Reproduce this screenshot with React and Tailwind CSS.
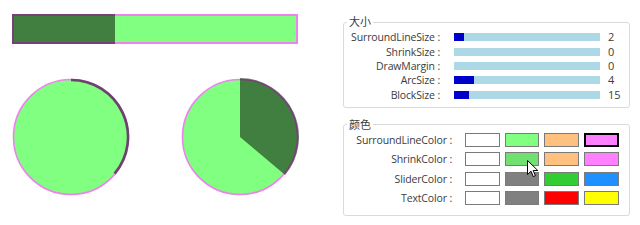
const sizes = [
  { label: 'SurroundLineSize :', value: 2, fill: 10 },
  { label: 'ShrinkSize :', value: 0, fill: 0 },
  { label: 'DrawMargin :', value: 0, fill: 0 },
  { label: 'ArcSize :', value: 4, fill: 20 },
  { label: 'BlockSize :', value: 15, fill: 15 },
]

const colors = [
  { label: 'SurroundLineColor :', swatches: ['bg-white', 'bg-[#80ff80]', 'bg-[#ffc080]', 'bg-[#ff80ff] border-black border-2'] },
  { label: 'ShrinkColor :', swatches: ['bg-white', 'bg-[#70e070]', 'bg-[#ffc080]', 'bg-[#ff80ff]'] },
  { label: 'SliderColor :', swatches: ['bg-white', 'bg-[#808080]', 'bg-[#32cd32]', 'bg-[#1e90ff]'] },
  { label: 'TextColor :', swatches: ['bg-white', 'bg-[#808080]', 'bg-[#ff0000]', 'bg-[#ffff00]'] },
]

const arcPoint = (cx, cy, r, deg) => {
  const a = (deg * Math.PI) / 180
  return [cx + r * Math.sin(a), cy - r * Math.cos(a)]
}

const Ring = () => {
  const [x, y] = arcPoint(60, 60, 57, 130)
  return (
    <svg width="120" height="120" viewBox="0 0 120 120">
      <circle cx="60" cy="60" r="57.5" fill="#80ff80" stroke="#ee82ee" strokeWidth="1.6" />
      <path d={`M60 3 A57 57 0 0 1 ${x} ${y}`} fill="none" stroke="#6b436b" strokeWidth="2.6" />
    </svg>
  )
}

const Pie = () => {
  const [x, y] = arcPoint(60, 60, 59, 130)
  return (
    <svg width="120" height="120" viewBox="0 0 120 120">
      <circle cx="60" cy="60" r="57.5" fill="#80ff80" stroke="#ee82ee" strokeWidth="1.6" />
      <path d={`M60 60 L60 1 A59 59 0 0 1 ${x} ${y} Z`} fill="rgba(0,0,0,0.5)" />
    </svg>
  )
}

const Cursor = () => (
  <svg className="absolute left-[527px] top-[160px]" width="12" height="18" viewBox="0 0 12 18">
    <path d="M0.5 0.5 L0.5 14.5 L4 11.2 L6.3 16.6 L8.4 15.7 L6.2 10.5 L10.8 10.5 Z" fill="white" stroke="black" strokeWidth="1" strokeLinejoin="round" />
  </svg>
)

export default function App() {
  return (
    <div className="relative flex w-[640px] h-[225px] bg-white font-['Open_Sans','Noto_Sans_CJK_SC',sans-serif] text-[11px] leading-[14px] text-[#3c3c3c]">
      <div className="w-[343px] pt-[14px]">
        <div className="relative ml-[12px] w-[286px] h-[30px] border-2 border-[#ee82ee] bg-[#80ff80]">
          <div className="absolute -left-[2px] -top-[2px] -bottom-[2px] w-[103px] bg-black/50" />
        </div>
        <div className="mt-[33px] ml-[11px] flex gap-[49px]">
          <Ring />
          <Pie />
        </div>
      </div>

      <div className="pt-[15px] w-[287px]">
        <fieldset className="border border-[#dadada] rounded-[3px] pb-[5px]">
          <legend className="ml-[3px] px-[2px]">大小</legend>
          <div className="pt-[1px] text-[10.5px] tracking-[-0.15px]">
            {sizes.map((s) => (
              <div key={s.label} className="flex items-center h-[14.4px]">
                <div className="w-[96px] text-right whitespace-nowrap">{s.label}</div>
                <div className="ml-[14px] w-[146px] h-[8px] bg-[#add8e6]">
                  <div className="h-full bg-[#0000cd]" style={{ width: s.fill }} />
                </div>
                <div className="ml-[8px] text-[11px]">{s.value}</div>
              </div>
            ))}
          </div>
        </fieldset>

        <fieldset className="mt-[10px] border border-[#dadada] rounded-[3px] pb-[10px]">
          <legend className="ml-[3px] px-[2px]">颜色</legend>
          <div className="pt-[1px] flex flex-col gap-[5.3px] text-[10.5px] tracking-[-0.15px]">
            {colors.map((c) => (
              <div key={c.label} className="flex items-center h-[14px]">
                <div className="w-[108px] text-right whitespace-nowrap">{c.label}</div>
                <div className="ml-[13px] flex gap-[5px]">
                  {c.swatches.map((sw, i) => (
                    <div key={i} className={`w-[34.7px] h-[14px] border border-[#7a7a7a] ${sw}`} />
                  ))}
                </div>
              </div>
            ))}
          </div>
        </fieldset>
      </div>
      <Cursor />
    </div>
  )
}
